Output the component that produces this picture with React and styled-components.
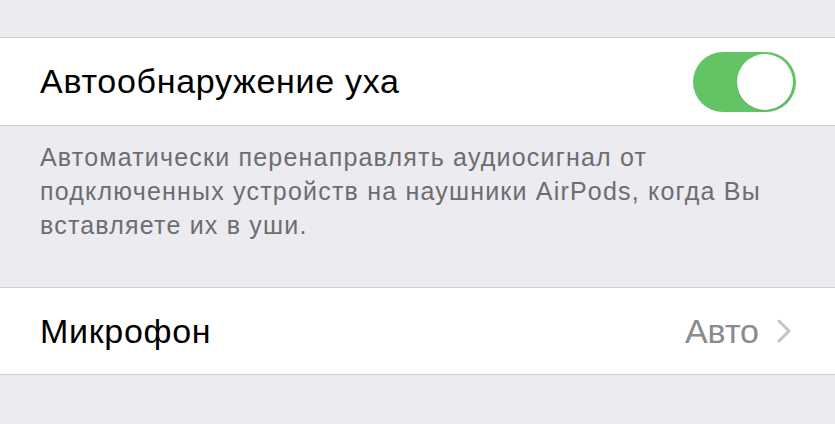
import styled, { createGlobalStyle } from 'styled-components';

const GlobalStyle = createGlobalStyle`
  html, body {
    margin: 0;
    padding: 0;
    background: #ebebf0;
  }
  * {
    box-sizing: border-box;
  }
`;

const Screen = styled.div`
  width: 835px;
  height: 424px;
  overflow: hidden;
  background: #ebebf0;
  font-family: 'Liberation Sans', Arial, sans-serif;
  padding-top: 37px;
`;

const Group = styled.div`
  background: #ffffff;
  border-top: 1px solid #cfcfd3;
  border-bottom: 1px solid #cfcfd3;
`;

const Row = styled.div`
  height: ${(p) => p.$height}px;
  display: flex;
  align-items: center;
  justify-content: space-between;
  padding: 0 40px 0 40px;
`;

const Label = styled.span`
  font-size: 34px;
  color: #000000;
  letter-spacing: 0.7px;
`;

const Footer = styled.div`
  height: 161px;
  padding: 14px 40px 0 40px;
  font-size: 25px;
  line-height: 34px;
  letter-spacing: 1.2px;
  color: #6d6d72;
`;

const FooterLine = styled.div`
  white-space: nowrap;
`;

const Toggle = styled.div`
  width: 103px;
  height: 60px;
  border-radius: 30px;
  background: #63c466;
  position: relative;
  margin-right: -1px;
`;

const Knob = styled.div`
  position: absolute;
  top: 2px;
  right: 3px;
  width: 56px;
  height: 56px;
  border-radius: 50%;
  background: #ffffff;
  box-shadow: 0 1px 2px rgba(0, 0, 0, 0.12);
`;

const Detail = styled.div`
  display: flex;
  align-items: center;
  gap: 18px;
  margin-right: 4px;
`;

const Value = styled.span`
  font-size: 34px;
  color: #8a8a8f;
`;

const Chevron = () => (
  <svg width="14" height="24" viewBox="0 0 14 24" fill="none">
    <path d="M2 2 L12 12 L2 22" stroke="#c4c4c8" strokeWidth="3" strokeLinecap="round" strokeLinejoin="round" />
  </svg>
);

export default function App() {
  return (
    <>
      <GlobalStyle />
      <Screen>
        <Group>
          <Row $height={87}>
            <Label>Автообнаружение уха</Label>
            <Toggle>
              <Knob />
            </Toggle>
          </Row>
        </Group>
        <Footer>
          <FooterLine>Автоматически перенаправлять аудиосигнал от</FooterLine>
          <FooterLine>подключенных устройств на наушники AirPods, когда Вы</FooterLine>
          <FooterLine>вставляете их в уши.</FooterLine>
        </Footer>
        <Group>
          <Row $height={86}>
            <Label>Микрофон</Label>
            <Detail>
              <Value>Авто</Value>
              <Chevron />
            </Detail>
          </Row>
        </Group>
      </Screen>
    </>
  );
}
